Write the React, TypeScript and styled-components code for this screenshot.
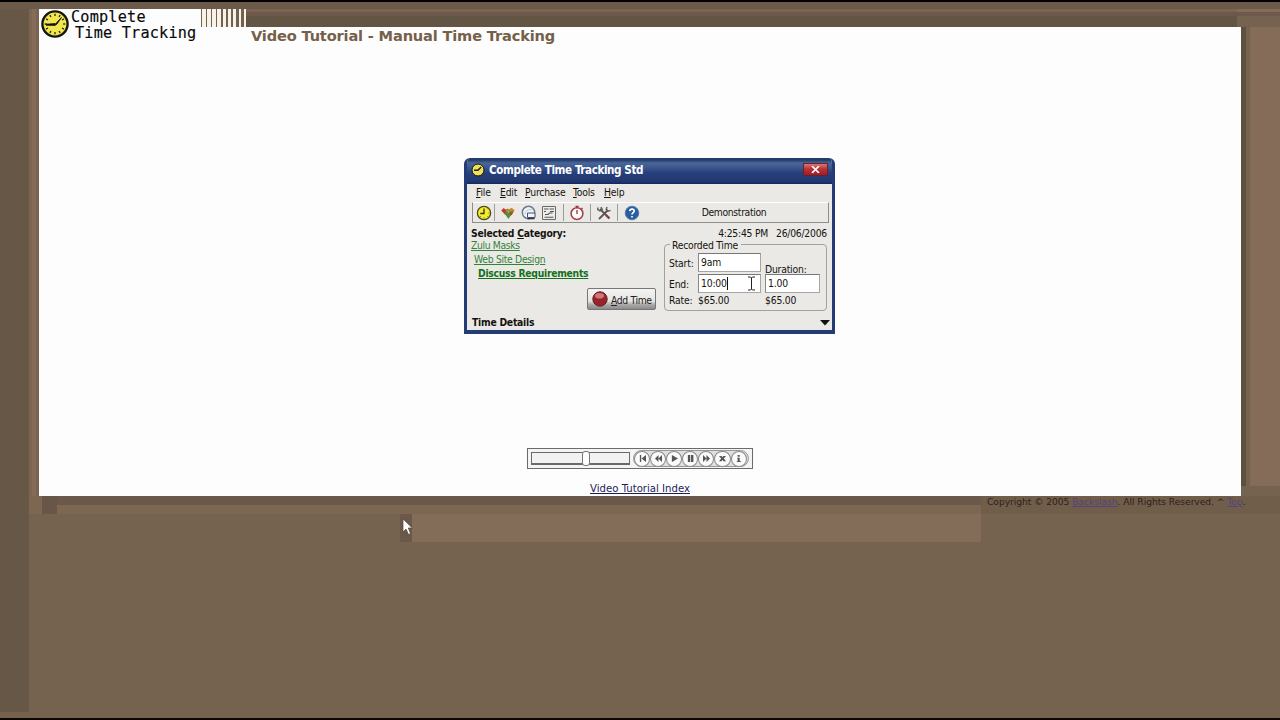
import React from 'react';
import styled, { createGlobalStyle } from 'styled-components';

const Global = createGlobalStyle`
  * { box-sizing: border-box; }
  html, body { margin: 0; padding: 0; background: #756350; }
  svg { display: block; flex: none; }
`;
const Screen = styled.div`
  width: 1280px; height: 720px; overflow: hidden; position: relative;
  display: flex; flex-direction: column;
  border-top: 2px solid #030202; border-bottom: 2px solid #0d0704;
  background: #756350;
  font-family: "DejaVu Sans Condensed", "DejaVu Sans", sans-serif;
`;
const TopEdge = styled.div`height: 7px; flex: none; background: #6b594a;`;
const Columns = styled.div`display: flex; height: 487px; flex: none;`;
const LeftRail = styled.div`
  width: 39px; flex: none;
  background: linear-gradient(90deg, #665747 0 29px, #7d6651 29px 32px, #846c58 32px 36px, #786451 36px);
`;
const RightRail = styled.div`
  width: 39px; flex: none; margin-top: 18px; height: 459px;
  background: linear-gradient(90deg, #5e503f 0 5px, #756250 5px 9px, #846c59 9px);
`;
const Center = styled.div`width: 1202px; display: flex; flex-direction: column;`;
const Head = styled.div`
  display: flex; height: 18px; flex: none; width: 1241px;
  background: linear-gradient(180deg, #7b6552 0 3px, #6c594a 3px 7px, #625543 7px);
`;
const HeadCorner = styled.div`width: 43px; margin-left: auto; background: linear-gradient(180deg, #846c59 0 3px, #6c594a 3px 7px, #756250 7px);`;
const LogoBox = styled.div`
  width: 162px; height: 34px; background: #fdfdfe; display: flex; padding: 1px 0 0 2px; position: relative; z-index: 1;
`;
const LogoText = styled.div`
  font: 15.2px/16px "DejaVu Sans Mono", monospace; color: #080808;
  white-space: pre; padding-left: 2px; margin-top: -1px;
  -webkit-text-stroke: .15px #080808;
`;
const LogoLine = styled.div<{ $in?: number }>`padding-left: ${p => p.$in || 0}px; letter-spacing: .2px; height: 16px;`;
const Stripes = styled.div`width: 49px; height: 18px; display: flex;`;
const Stripe = styled.span<{ $dark: number }>`
  width: 5px; flex: none; background: #f8f3e8; border-left: ${p => p.$dark}px solid #74624e;
`;
const Paper = styled.main`
  background: #fdfdfe; height: 469px; display: flex; flex-direction: column; align-items: center;
`;
const PageTitle = styled.h1`
  margin: 0; align-self: flex-start; padding-left: 212px; height: 131px; white-space: nowrap;
  font: bold 14.6px/18px "DejaVu Sans", sans-serif; letter-spacing: -.17px; color: #756049;
`;

const Win = styled.section`
  width: 371px; height: 176px; margin-left: 19px; flex: none; color: #16130f; font-size: 10.3px; line-height: 13px;
  border: solid #233c74; border-width: 0 3px 4px; border-radius: 6px 6px 0 0; background: #eae9e6; overflow: hidden;
  white-space: nowrap;
`;
const TitleBar = styled.header`
  height: 26px; margin: 0 -3px; padding: 0 7px 3px 7px; display: flex; align-items: center; color: #fff;
  background: linear-gradient(180deg, #233c6e 0 2px, #4b6595 5px, #3e5990 9px, #263f7b 15px, #223870 23px, #13295d 26px);
`;
const WinName = styled.span`font: bold 11.6px/14px "DejaVu Sans Condensed", sans-serif; padding-left: 4px; letter-spacing: -.42px; flex: 1;`;
const Close = styled.button`
  width: 25px; height: 13px; padding: 0; border: 1px solid #672032; background: linear-gradient(#d87975, #bd3035 45%, #9b2029);
  display: flex; align-items: center; justify-content: center;
`;
const Menu = styled.nav`height: 18px; padding: 2px 0 0 9px; display: flex;`;
const MenuItem = styled.span<{ $w: number }>`width: ${p => p.$w}px; letter-spacing: -.2px;`;
const Key = styled.u`text-underline-offset: 1px;`;
const ToolBar = styled.div`
  height: 21px; margin: 0 3px 0 5px; display: flex; align-items: center; padding-left: 3px; background: #eae9e6;
  border: 1px solid #8e8e8c; border-top-color: #fff;
`;
const Slot = styled.span<{ $w: number; $pad?: number; $bar?: boolean }>`
  width: ${p => p.$w}px; height: 17px; display: flex; align-items: center; flex: none; padding-left: ${p => p.$pad || 0}px;
  border-right: ${p => p.$bar ? '1px solid #9c9c98' : '0'};
`;
const Demo = styled.span`flex: 1; text-align: center; letter-spacing: -.35px; padding-right: 6px;`;
const Body = styled.div`display: flex; height: 88px;`;
const Categories = styled.div`width: 194px; padding: 4px 0 0 4px; display: flex; flex-direction: column; align-items: flex-start;`;
const Label = styled.b`font-size: 10.3px; line-height: 13px; letter-spacing: -.25px;`;
const Cat = styled.a<{ $in: number; $bold?: boolean; $gap: number }>`
  margin-left: ${p => p.$in}px; margin-bottom: 1px; color: ${p => p.$bold ? '#14701a' : '#338238'}; text-decoration: underline;
  text-underline-offset: 1px; line-height: 13px; position: relative; top: -1px;
  font-weight: ${p => p.$bold ? 700 : 400}; letter-spacing: ${p => p.$gap}px;
`;
const AddButton = styled.button`
  width: 69px; height: 22px; margin: 6px 0 0 116px; padding: 0 0 0 4px; display: flex; align-items: center; gap: 3px; flex: none;
  border: 1px solid #777; border-radius: 2px; background: linear-gradient(#f4f4f3, #e5e5e3 60%, #aaa 78%, #8b8b89);
  font: 10.3px "DejaVu Sans Condensed", sans-serif; letter-spacing: -.35px; color: #222; white-space: nowrap;
`;
const ButtonText = styled.span`padding-top: 2px;`;
const Right = styled.div`flex: 1; padding-top: 4px;`;
const Clock = styled.div`display: flex; justify-content: flex-end; gap: 8px; padding-right: 5px; letter-spacing: -.24px;`;
const Group = styled.fieldset`
  margin: -4px 0 0 3px; width: 163px; height: 75px; border: 1px solid #a1a19d; border-radius: 4px; padding: 0 0 0 4px; min-width: 0;
`;
const Legend = styled.legend`margin-left: 1px; padding: 2px 3px 0 2px; line-height: 15px; letter-spacing: -.25px;`;
const Fields = styled.div`display: grid; grid-template-columns: 29px 67px 56px; grid-template-rows: 21px 21px 13px; align-items: center; margin-top: -1px;`;
const Input = styled.div<{ $w: number }>`
  width: ${p => p.$w}px; height: 19px; border: 1px solid #a6a6a4; border-top-color: #777; border-left-color: #888; background: #fff;
  padding: 0 4px 0 2px; display: flex; align-items: center; justify-content: space-between; letter-spacing: -.2px;
`;
const Caret = styled.span`border-right: 1px solid #111;`;
const Small = styled.span<{ $down?: number }>`letter-spacing: -.2px; padding-top: ${p => p.$down || 0}px;`;
const Details = styled.footer`display: flex; justify-content: space-between; align-items: center; padding: 3px 2px 0 5px; height: 20px;`;

const Player = styled.div`
  width: 226px; height: 21px; margin-top: 114px; flex: none; border: 1px solid #6b6b6b; background: #f4f4f4; display: flex; align-items: center; padding: 0 3px;
`;
const Track = styled.div`width: 99px; height: 13px; border: 1px solid #6a6a6a; border-bottom-width: 2px; background: #f2f2f2; display: flex; align-items: center; padding-left: 50px;`;
const Thumb = styled.div`width: 8px; height: 15px; flex: none; border: 1px solid #777; border-radius: 3px; background: #fff;`;
const Buttons = styled.div`
  display: flex; align-items: center; margin-left: 3px; width: 116px; height: 17px; border: 1px solid #999; border-radius: 9px; background: #dfdfdf;
`;
const Round = styled.span`width: 16.1px; height: 16px; flex: none; border: 1px solid #8a8a8a; border-radius: 50%; background: #fafafa; display: flex; align-items: center; justify-content: center;`;
const IndexLink = styled.a`margin-top: 13px; font: 10.15px/13px "DejaVu Sans", sans-serif; color: #1c1c58; text-decoration: underline; text-underline-offset: 1px;`;

const Under = styled.div`display: flex; height: 222px; flex: none;`;
const UnderLeft = styled.div`width: 29px; height: 216px; background: #665747;`;
const UnderMain = styled.div`flex: 1; height: 216px;`;
const Shade = styled.div`
  height: 18px; display: flex; justify-content: flex-end;
  background: linear-gradient(90deg, #7d6753 0 13px, transparent 13px), linear-gradient(90deg, #685648 0 28px, transparent 28px), linear-gradient(#6a584b 0 9px, #7d6753 9px 18px);
`;
const Copy = styled.div`
  width: 299px; background: #705e4b; padding-left: 6px; white-space: nowrap;
  font: 9.2px/12px "DejaVu Sans", sans-serif; letter-spacing: -.06px; color: #2f211c;
`;
const CopyLink = styled.a`color: #54427c; text-decoration: underline;`;
const Patch = styled.div`margin-left: 371px; width: 581px; height: 28px; background: linear-gradient(90deg, #6a5848 0 12px, #836c58 12px);`;
const BottomEdge = styled.div`height: 5px; flex: none; background: linear-gradient(#67543f, #846b54);`;
const Pointer = styled.svg`position: absolute; left: 402px; top: 516px;`;

const ClockFace = ({ s }: { s: number }) => (
  <svg width={s} height={s} viewBox="0 0 28 28">
    <circle cx="14" cy="14" r="12.6" fill="#f2e64d" stroke="#17170f" strokeWidth="2.4" />
    {Array.from({ length: 12 }, (_, i) => <path key={i} d="M14 3.7v2.2" stroke="#222" strokeWidth="1.3" transform={`rotate(${i * 30} 14 14)`} />)}
    <path d="m14 14.4 6.5-7-4.5 6.6-2 1.4-9-.2v-1l9-.6z" fill="#111" stroke="#111" strokeWidth=".8" />
  </svg>
);
const TitleClock = () => (
  <svg width="14" height="14" viewBox="0 0 14 14">
    <circle cx="7" cy="7" r="6" fill="#efe25a" stroke="#17170f" strokeWidth="1" />
    <path d="m6.8 7.4 3.4-3.4M7 7.3H3" stroke="#222" strokeWidth="1.5" />
  </svg>
);
const glyphs = [
  'M1 0h1.5v8H1zM8 0v8L3 4z', 'M4 0v8L0 4zM8 0v8L4 4z', 'M1 0v8l7-4z', 'M1 0h2.7v8H1zM4.6 0h2.7v8H4.6z',
  'M0 0v8l4-4zM4 0v8l4-4z', 'M0 1h3l1 1.5L5 1h3L5.5 4 8 7H5L4 5.5 3 7H0l2.5-3z', 'M3 0h2.4v2H3zM2.4 3h3v4H7v1H2V7h1V4h-.6z',
];

const ToolIcon = ({ kind }: { kind: string }) => (
  <svg width="16" height="16" viewBox="0 0 16 16" fill="none">
    {kind === 'clock' && <><circle cx="8" cy="8" r="6.6" fill="#f6ee2b" stroke="#4c491b" strokeWidth="1.3" /><path d="M8 3.6v4.9H4.3" stroke="#33301a" strokeWidth="1.3" /><path d="M11.2 4l.7-.7M11.5 11.5l.7.7M4 12l.7-.7M12.4 8h1M8 12.4v1" stroke="#666" /></>}
    {kind === 'hearts' && <><path d="M1.2 5.4 3.6 3 6 4.8 7.5 8 5.4 10z" fill="#c23c2c" /><path d="m8.6 4.6 3-1.8 3 2.4-2.2 4-3.4-1z" fill="#c58a2b" /><path d="m4.6 8.4 2-2 1.6 1L10.4 6l2 2.2L8.4 14z" fill="#4b943a" /><path d="m5.6 4.6 2.3-1.1 1.4 1.7-1.4 2.4z" fill="#ad8031" /><path d="m11 7 2.3-1-1.4 4-2.2.6z" fill="#b3402f" /></>}
    {kind === 'search' && <><circle cx="7.5" cy="7.5" r="6.2" fill="#f2f5fa" stroke="#6c7b94" strokeWidth="1.5" /><path d="M3.5 9.5C5 5 8.500 3.500 11 5" stroke="#c4d0e0" strokeWidth="1.4" /><path d="M6.500 8h7.500v4.5H6.500z" fill="#f0f3f8" stroke="#42536b" /><path d="M6.500 13.600h7" stroke="#2c3544" strokeWidth="1.3" /></>}
    {kind === 'sheet' && <><path d="M1.5 1.500h13v13h-13z" fill="#ededeb" stroke="#6a6a68" /><path d="M3 4h4.500m1 0h4.500M3 6.500h2m4 0h4M4 9.500h3l1.500-1.500h3M3.500 12.300h9" stroke="#555" strokeWidth="1.100" /></>}
    {kind === 'timer' && <><circle cx="8" cy="8.600" r="5.900" fill="#fdfbfb" stroke="#a4434a" strokeWidth="1.600" /><path d="M6.500 1.300h3M8 1.300v2M8 5v4M12.500 3l1 1" stroke="#963039" strokeWidth="1.300" /></>}
    {kind === 'tools' && <><path d="m3 14 9-9M4 4l9 9" stroke="#555" strokeWidth="1.800" /><path d="M1.800 2.500v2.200L4 6l2.200-1.600L5 2M11 2l-.8 2.500L12 6.300l2.500-1" stroke="#5c5c5c" strokeWidth="1.400" /><path d="m10 10 3.500 3.500" stroke="#864146" strokeWidth="2.200" /></>}
    {kind === 'help' && <><circle cx="8" cy="8" r="6.800" fill="#285e9f" stroke="#5b7cab" /><path d="M5.800 6.100c.2-3 4.700-2.500 4.400 0C10 7.700 8 7.600 8 9.500M8 11v1.600" stroke="#fff" strokeWidth="1.700" /></>}
  </svg>
);

export default function App() {
  return (
    <Screen>
      <Global />
      <TopEdge />
      <Columns>
        <LeftRail />
        <Center>
          <Head>
            <LogoBox>
              <ClockFace s={28} />
              <LogoText><LogoLine>Complete</LogoLine><LogoLine $in={4}>Time Tracking</LogoLine></LogoText>
            </LogoBox>
            <Stripes>{[1, 1, 1, 1, 2, 2, 2, 3, 3].map((w, i) => <Stripe key={i} $dark={w} />)}</Stripes>
            <HeadCorner />
          </Head>
          <Paper>
            <PageTitle>Video Tutorial - Manual Time Tracking</PageTitle>
            <Win>
              <TitleBar>
                <TitleClock />
                <WinName>Complete Time Tracking Std</WinName>
                <Close><svg width="9" height="7" viewBox="0 0 9 7"><path d="m1 0 7 7M8 0 1 7" stroke="#fff" strokeWidth="1.7" /></svg></Close>
              </TitleBar>
              <Menu>
                <MenuItem $w={24}><Key>F</Key>ile</MenuItem><MenuItem $w={25}><Key>E</Key>dit</MenuItem>
                <MenuItem $w={48}><Key>P</Key>urchase</MenuItem><MenuItem $w={31}><Key>T</Key>ools</MenuItem><MenuItem $w={25}><Key>H</Key>elp</MenuItem>
              </Menu>
              <ToolBar>
                <Slot $w={19} $bar><ToolIcon kind="clock" /></Slot>
                <Slot $w={26} $pad={5}><ToolIcon kind="hearts" /></Slot>
                <Slot $w={20}><ToolIcon kind="search" /></Slot>
                <Slot $w={23} $bar><ToolIcon kind="sheet" /></Slot>
                <Slot $w={27} $pad={5} $bar><ToolIcon kind="timer" /></Slot>
                <Slot $w={27} $pad={5} $bar><ToolIcon kind="tools" /></Slot>
                <Slot $w={28} $pad={6}><ToolIcon kind="help" /></Slot>
                <Demo>Demonstration</Demo>
              </ToolBar>
              <Body>
                <Categories>
                  <Label>Selected <Key>C</Key>ategory:</Label>
                  <Cat $in={0} $gap={-0.35}>Zulu Masks</Cat>
                  <Cat $in={3} $gap={-0.3}>Web Site Design</Cat>
                  <Cat $in={7} $gap={-0.28} $bold>Discuss Requirements</Cat>
                  <AddButton>
                    <svg width="16" height="16" viewBox="0 0 16 16"><circle cx="8" cy="8" r="7.2" fill="#98242b" stroke="#642024" /><ellipse cx="7.5" cy="4.8" rx="4.5" ry="2.8" fill="#cf7775" /></svg>
                    <ButtonText><Key>A</Key>dd Time</ButtonText>
                  </AddButton>
                </Categories>
                <Right>
                  <Clock><span>4:25:45 PM</span><span>26/06/2006</span></Clock>
                  <Group>
                    <Legend>Recorded Time</Legend>
                    <Fields>
                      <Small $down={2}>Start:</Small><Input $w={63}>9am</Input><Small $down={13}>Duration:</Small>
                      <Small $down={2}>End:</Small>
                      <Input $w={63}><Caret>10:00</Caret><svg width="9" height="15" viewBox="0 0 9 15"><path d="M1 1h2.5l1 1 1-1H8M1 14h2.5l1-1 1 1H8M4.5 2v11" stroke="#222" fill="none" /></svg></Input>
                      <Input $w={55}>1.00</Input>
                      <Small>Rate:</Small><Small>$65.00</Small><Small>$65.00</Small>
                    </Fields>
                  </Group>
                </Right>
              </Body>
              <Details><Label>Time Details</Label><svg width="10" height="6" viewBox="0 0 10 6"><path d="M0 0h10L5 5.5z" fill="#111" /></svg></Details>
            </Win>
            <Player>
              <Track><Thumb /></Track>
              <Buttons>{glyphs.map(d => <Round key={d}><svg width="7" height="7" viewBox="0 0 8 8"><path d={d} fill="#555" /></svg></Round>)}</Buttons>
            </Player>
            <IndexLink>Video Tutorial Index</IndexLink>
          </Paper>
        </Center>
        <RightRail />
      </Columns>
      <Under>
        <UnderLeft />
        <UnderMain>
          <Shade><Copy>Copyright © 2005 <CopyLink>Backslash</CopyLink>. All Rights Reserved. ^ <CopyLink>Top</CopyLink>.</Copy></Shade>
          <Patch />
        </UnderMain>
      </Under>
      <BottomEdge />
      <Pointer width="12" height="18" viewBox="0 0 12 18"><path d="M1 1v13l3-3 2.500 5.500 2-1L6.300 10h4z" fill="#fff" stroke="#55453c" strokeWidth=".7" /></Pointer>
    </Screen>
  );
}
